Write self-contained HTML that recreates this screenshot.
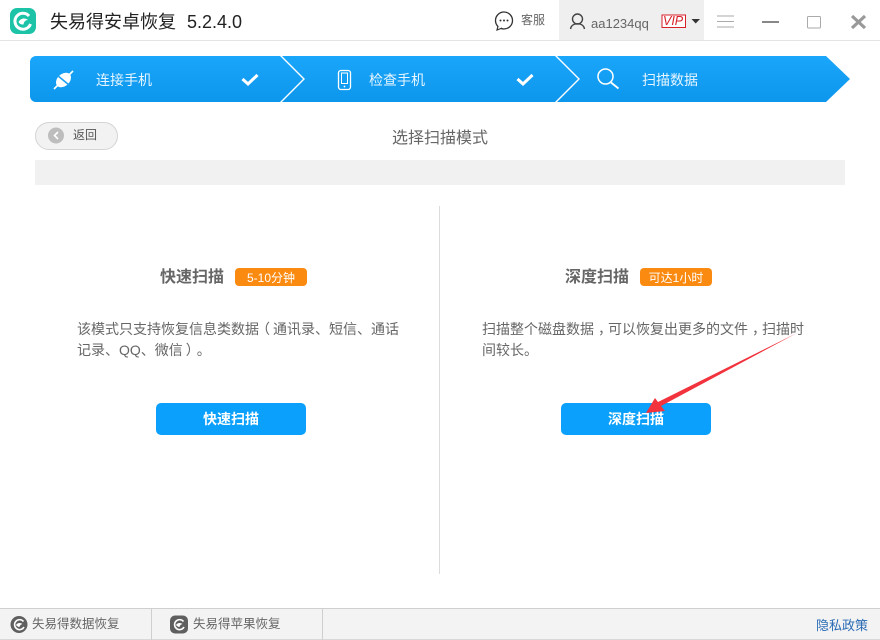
<!DOCTYPE html>
<html lang="zh"><head><meta charset="utf-8"><title>失易得安卓恢复</title>
<style>
html,body{margin:0;padding:0;background:#fff}
#r{position:relative;width:880px;height:640px;overflow:hidden;background:#fff;font-family:"Liberation Sans","Noto Sans CJK SC",sans-serif;color:#555;text-spacing-trim:space-all;font-feature-settings:normal}
.t{position:absolute;white-space:nowrap;line-height:1}
.c{position:relative;left:4px}.l{position:relative;left:-3px}.o{position:relative;left:3px}
svg{position:absolute;overflow:visible}
.btn{position:absolute;top:403px;width:150px;height:32px;background:#0aa0fb;border-radius:5px;color:#fff;font-size:14px;line-height:32px;text-align:center;font-weight:700}
.tag{position:absolute;top:268px;width:72px;height:18px;background:#fa8a10;border-radius:4px;color:#fff;font-size:12px;line-height:20px;text-align:center}
</style></head><body><div id="r">

<svg style="left:0;top:0" width="880" height="640" viewBox="0 0 880 640">
<defs><linearGradient id="g" x1="0" y1="0" x2="0" y2="1"><stop offset="0" stop-color="#1aa6fb"/><stop offset="1" stop-color="#0c96ec"/></linearGradient></defs>
<rect x="10" y="8" width="26" height="26" rx="7" fill="#1dc3a7"/>
<path d="M29 16A8 8 0 1 0 30.500 24" fill="none" stroke="#fff" stroke-width="3"/>
<path d="M18.500 22C20.500 18 25 17.500 28 20C25.500 20 24 21.500 23.500 24.500C21.500 24.800 19.500 23.800 18.500 22Z" fill="#fff"/>
<rect x="0" y="40" width="880" height="1" fill="#e4e4e4"/>
<rect x="559" y="0" width="145" height="40" fill="#efefef"/>
<path d="M36 56H826L850 79L826 102H36A6 6 0 0 1 30 96V62A6 6 0 0 1 36 56Z" fill="url(#g)"/>
<path d="M280 55L304 79L280 103M555 55L579 79L555 103" fill="none" stroke="#fff" stroke-width="1.400"/>
<path d="M54 89L59 84M68 76L73 71" stroke="#fff" stroke-width="1.600" fill="none"/>
<ellipse cx="63.500" cy="80" rx="8.500" ry="6" transform="rotate(-42 63.500 80)" fill="#fff"/>
<path d="M57 75L69 85" stroke="#1aa0f5" stroke-width="1.500"/>
<path d="M242.500 79L248 84L257.500 75M517.500 79L523 84L532.500 75" fill="none" stroke="#fff" stroke-width="3"/>
<rect x="338.500" y="70.500" width="12" height="19" rx="2.500" fill="none" stroke="#fff" stroke-width="1.300"/>
<path d="M341.500 73V83.500H347.500V73Z" fill="none" stroke="#fff" stroke-width="1"/><circle cx="344.500" cy="86.500" r=".9" fill="#fff"/>
<circle cx="605.500" cy="76.500" r="7.500" fill="none" stroke="#fff" stroke-width="1.500"/>
<path d="M611 82.500L618.500 88.500" stroke="#fff" stroke-width="1.800"/>
<circle cx="504" cy="20.500" r="8.500" fill="none" stroke="#333" stroke-width="1.300"/>
<path d="M498 26L497 30L502 28" fill="#fff" stroke="#333" stroke-width="1.200"/>
<circle cx="500.500" cy="20.500" r="1" fill="#333"/><circle cx="504" cy="20.500" r="1" fill="#333"/><circle cx="507.500" cy="20.500" r="1" fill="#333"/>
<circle cx="577.500" cy="19" r="5" fill="none" stroke="#444" stroke-width="1.400"/>
<path d="M570.500 29C571 25.500 574 23.800 577.500 23.800S584 25.500 584.500 29" fill="none" stroke="#444" stroke-width="1.400"/>
<rect x="662" y="15" width="23.500" height="12.500" fill="#fff" stroke="#d7202a"/>
<path d="M691.500 19H700L695.700 23.500Z" fill="#333"/>
<path d="M717 16H734M717 21.500H734M717 27H734" stroke="#aaa" stroke-width="1"/>
<rect x="762" y="21" width="17" height="2" fill="#888"/>
<rect x="807.500" y="16.500" width="13" height="11.500" rx="1" fill="none" stroke="#aaa"/>
<path d="M852 16L865 28M865 16L852 28" stroke="#999" stroke-width="3.200"/>
<rect x="35.500" y="122.500" width="82" height="27" rx="13.500" fill="#f2f2f2" stroke="#d4d4d4"/>
<circle cx="56" cy="135.500" r="8" fill="#bdbdbd"/>
<path d="M58 132L54.500 135.500L58 139" fill="none" stroke="#fff" stroke-width="1.600"/>
<rect x="35" y="160" width="810" height="25" fill="#f1f1f1"/>
<rect x="439" y="206" width="1" height="368" fill="#dcdcdc"/>
<rect x="0" y="608" width="880" height="32" fill="#f3f3f3"/>
<rect x="0" y="608" width="880" height="1" fill="#cfcfcf"/>
<rect x="0" y="639" width="880" height="1" fill="#d8d8d8"/>
<rect x="151" y="608" width="1" height="32" fill="#cfcfcf"/>
<rect x="322" y="608" width="1" height="32" fill="#cfcfcf"/>
<circle cx="19" cy="624.500" r="8.500" fill="#5f5f5f"/>
<path d="M23.500 621.500A5 5 0 1 0 24 627" fill="none" stroke="#fff" stroke-width="1.600"/><path d="M16 625C17.500 622.500 20.500 622.500 22.500 624C20.500 624.500 20 625.500 19.500 627C18 627 17 626 16 625Z" fill="#fff"/>
<rect x="170" y="615.500" width="18" height="18" rx="5" fill="#5f5f5f"/>
<path d="M183.500 621.500A5 5 0 1 0 184 627" fill="none" stroke="#fff" stroke-width="1.600"/><path d="M176 625C177.500 622.500 180.500 622.500 182.500 624C180.500 624.500 180 625.500 179.500 627C178 627 177 626 176 625Z" fill="#fff"/>
</svg>

<div class="t" style="left:50px;top:13px;font-size:18px;color:#222">失易得安卓恢复</div>
<div class="t" style="left:187px;top:13px;font-size:18px;color:#222">5.2.4.0</div>
<div class="t" style="left:521px;top:14px;font-size:12px;color:#666">客服</div>
<div class="t" style="left:591px;top:17px;font-size:13px;color:#666">aa1234qq</div>
<div class="t" style="left:663px;top:15px;font-size:12.500px;font-weight:400;font-style:italic;color:#d7202a">VIP</div>
<div class="t" style="left:96px;top:73px;font-size:14px;color:#e6f5ff">连接手机</div>
<div class="t" style="left:369px;top:73px;font-size:14px;color:#e6f5ff">检查手机</div>
<div class="t" style="left:642px;top:73px;font-size:14px;color:#e6f5ff">扫描数据</div>
<div class="t" style="left:73px;top:129px;font-size:12px;color:#555">返回</div>
<div class="t" style="left:392px;top:131px;font-size:16px;color:#666">选择扫描模式</div>

<div class="t" style="left:160px;top:270px;font-size:16px;font-weight:700;color:#666">快速扫描</div>
<div class="tag" style="left:235px">5-10分钟</div>
<div class="t" style="left:77px;top:319px;font-size:14px;line-height:21px;color:#666;white-space:normal;width:330px">该模式只支持恢复信息类数据<span class="l">（</span>通讯录、短信、通话<br>记录、QQ、微信<span class="o">）</span>。</div>
<div class="btn" style="left:156px">快速扫描</div>

<div class="t" style="left:565px;top:270px;font-size:16px;font-weight:700;color:#666">深度扫描</div>
<div class="tag" style="left:640px">可达1小时</div>
<div class="t" style="left:482px;top:319px;font-size:14px;line-height:21px;color:#666;white-space:normal;width:330px">扫描整个磁盘数据<span class="c">，</span>可以恢复出更多的文件<span class="c">，</span>扫描时<br>间较长。</div>
<div class="btn" style="left:561px">深度扫描</div>

<div class="t" style="left:32px;top:618px;font-size:12.500px;color:#666">失易得数据恢复</div>
<div class="t" style="left:193px;top:618px;font-size:12.500px;color:#666">失易得苹果恢复</div>
<div class="t" style="left:816px;top:619px;font-size:13px;color:#2a6cb5">隐私政策</div>

<svg style="left:0;top:0;z-index:3" width="880" height="640" viewBox="0 0 880 640">
<path d="M797 333L658 402L655 398L646 413L665 411L661 406Z" fill="#f2323c"/>
</svg>
</div></body></html>
